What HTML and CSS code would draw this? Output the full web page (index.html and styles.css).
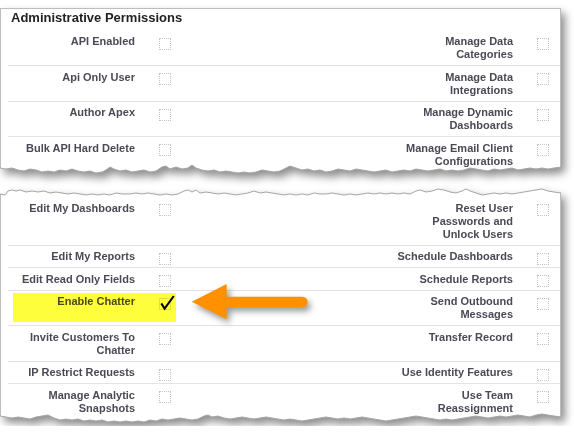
FILE: index.html
```html
<!DOCTYPE html>
<html>
<head>
<meta charset="utf-8">
<link rel="stylesheet" href="styles.css">
</head>
<body>
<div class="page">
  <div class="sheet sheet-one">
    <div class="paper paper-one">
      <div class="title">Administrative Permissions</div>
      <div class="rows">
        <div class="lbl">API Enabled</div><div class="dat"><span class="cb"></span></div>
        <div class="lbl">Manage Data<br>Categories</div><div class="dat"><span class="cb"></span></div>
        <div class="lbl">Api Only User</div><div class="dat"><span class="cb"></span></div>
        <div class="lbl">Manage Data<br>Integrations</div><div class="dat"><span class="cb"></span></div>
        <div class="lbl">Author Apex</div><div class="dat"><span class="cb"></span></div>
        <div class="lbl">Manage Dynamic<br>Dashboards</div><div class="dat"><span class="cb"></span></div>
        <div class="lbl">Bulk API Hard Delete</div><div class="dat"><span class="cb"></span></div>
        <div class="lbl">Manage Email Client<br>Configurations</div><div class="dat"><span class="cb"></span></div>
      </div>
    </div>
    <svg class="edge" width="561" height="166" viewBox="0 0 561 166">
      <path class="jag" d="M0 160 L6 161 L12 160 L18 162 L24 163 L30 161 L36 162 L42 164 L48 163 L54 164 L60 162 L66 163 L72 161 L78 163 L84 164 L90 163 L96 165 L102 164 L106 162 L110 159 L114 161 L120 163 L126 162 L132 164 L138 163 L144 162 L150 164 L156 163 L162 159 L166 158 L170 161 L176 159 L182 161 L188 160 L192 157 L196 160 L202 162 L208 163 L214 162 L220 164 L226 163 L232 164 L238 165 L244 164 L250 165 L256 164 L262 162 L268 163 L274 164 L280 163 L286 160 L290 158 L296 160 L302 162 L308 161 L314 163 L320 162 L326 164 L332 163 L338 161 L344 162 L350 163 L356 161 L362 162 L368 163 L374 164 L380 163 L386 162 L392 164 L398 163 L404 162 L410 163 L416 161 L422 162 L428 163 L434 162 L440 161 L446 163 L452 162 L458 163 L464 162 L470 160 L476 161 L482 162 L488 163 L494 161 L500 162 L506 161 L512 160 L518 162 L524 161 L530 160 L536 161 L542 160 L548 161 L554 160 L561 159"/>
    </svg>
  </div>

  <div class="sheet sheet-two">
    <div class="clip-top">
      <div class="paper paper-two">
        <div class="rows">
          <div class="lbl">Edit My Dashboards</div><div class="dat"><span class="cb"></span></div>
          <div class="lbl">Reset User<br>Passwords and<br>Unlock Users</div><div class="dat"><span class="cb"></span></div>
          <div class="lbl">Edit My Reports</div><div class="dat"><span class="cb"></span></div>
          <div class="lbl">Schedule Dashboards</div><div class="dat"><span class="cb"></span></div>
          <div class="lbl">Edit Read Only Fields</div><div class="dat"><span class="cb"></span></div>
          <div class="lbl">Schedule Reports</div><div class="dat"><span class="cb"></span></div>
          <div class="lbl">Enable Chatter</div><div class="dat"><svg class="cbx" width="12" height="12" viewBox="0 0 12 12"><rect x="0.5" y="0.5" width="11" height="11" fill="none" stroke="#c4c4c4" stroke-dasharray="1 1"/><path d="M2.3 5.4 L5.6 10.6 L14.8 -2" fill="none" stroke="#000" stroke-width="2"/></svg></div>
          <div class="lbl">Send Outbound<br>Messages</div><div class="dat"><span class="cb"></span></div>
          <div class="lbl">Invite Customers To<br>Chatter</div><div class="dat"><span class="cb"></span></div>
          <div class="lbl">Transfer Record</div><div class="dat"><span class="cb"></span></div>
          <div class="lbl">IP Restrict Requests</div><div class="dat"><span class="cb"></span></div>
          <div class="lbl">Use Identity Features</div><div class="dat"><span class="cb"></span></div>
          <div class="lbl">Manage Analytic<br>Snapshots</div><div class="dat"><span class="cb"></span></div>
          <div class="lbl">Use Team<br>Reassignment<br>Wizards</div><div class="dat"><span class="cb"></span></div>
        </div>
        <div class="highlight"></div>
        <svg class="arrow" width="130" height="50" viewBox="0 0 130 50">
          <path d="M5.7 21.7 L40.7 4 L40.7 16.7 L116.4 16.7 A5.3 5.3 0 0 1 116.4 27.3 L40.7 27.3 L40.7 39.3 Z" fill="#ff9000"/>
        </svg>
      </div>
    </div>
    <svg class="edge" width="561" height="241" viewBox="0 0 561 241">
      <path class="jag" d="M0 9 L5 10 L8 6 L12 5 L16 6 L20 5 L26 7 L32 6 L38 7 L44 6 L50 8 L56 7 L62 8 L68 9 L74 8 L80 9 L86 10 L92 9 L98 10 L104 9 L110 10 L116 8 L122 9 L130 9 L136 8 L142 9 L148 8 L154 9 L160 10 L166 9 L172 10 L178 9 L184 6 L188 5 L192 7 L196 5 L200 8 L206 7 L212 8 L218 9 L224 8 L230 9 L236 10 L242 9 L248 8 L254 6 L260 8 L266 7 L272 8 L278 9 L284 10 L290 9 L296 10 L302 9 L308 10 L314 8 L320 9 L326 9 L332 8 L338 9 L344 10 L350 9 L356 10 L362 9 L368 8 L374 9 L380 8 L386 9 L392 8 L398 9 L404 8 L410 9 L416 6 L420 5 L426 7 L432 6 L438 4 L444 5 L450 7 L456 8 L462 6 L466 4 L470 6 L476 8 L482 10 L488 9 L494 8 L500 9 L506 8 L512 9 L518 8 L524 7 L530 6 L536 5 L542 4 L548 6 L554 7 L561 8"/>
      <path class="jag" d="M0 231 L6 232 L12 233 L18 232 L24 233 L30 234 L36 232 L42 231 L48 230 L54 233 L60 235 L66 234 L72 235 L78 234 L84 236 L90 235 L96 236 L102 235 L108 237 L114 236 L120 237 L126 236 L132 237 L138 236 L144 237 L150 235 L156 236 L162 234 L168 235 L174 234 L180 233 L186 234 L192 235 L198 234 L204 231 L208 230 L212 232 L218 231 L224 233 L230 234 L236 233 L242 232 L248 233 L254 234 L260 233 L266 232 L272 233 L278 234 L284 235 L290 234 L296 235 L302 236 L308 235 L314 234 L320 233 L326 232 L332 233 L338 234 L344 233 L350 234 L356 233 L362 232 L368 233 L374 234 L380 235 L386 236 L392 235 L398 234 L404 233 L410 232 L416 231 L422 232 L428 233 L434 234 L440 235 L446 234 L452 235 L458 234 L464 233 L470 232 L476 231 L482 232 L488 233 L494 232 L500 231 L506 232 L512 231 L518 230 L524 231 L530 232 L536 230 L542 229 L548 230 L554 231 L561 232"/>
    </svg>
  </div>
</div>
</body>
</html>
```
FILE: styles.css
```css
html, body {
  margin: 0;
  background: #fff;
}
body {
  font-family: "Liberation Sans", Arial, sans-serif;
}
.page {
  padding-top: 8px;
}
.sheet {
  position: relative;
  width: 561px;
  filter: drop-shadow(4px 5px 4px rgba(0, 0, 0, 0.45));
}
.sheet-two {
  margin-top: 11px;
}
.paper {
  position: relative;
  box-sizing: border-box;
  background: #fff;
  border-left: 1px solid #bdbdbd;
  border-right: 1px solid #bdbdbd;
}
.paper-one {
  height: 166px;
  border-top: 1px solid #bdbdbd;
  clip-path: path('M0 0 L0 160 L6 161 L12 160 L18 162 L24 163 L30 161 L36 162 L42 164 L48 163 L54 164 L60 162 L66 163 L72 161 L78 163 L84 164 L90 163 L96 165 L102 164 L106 162 L110 159 L114 161 L120 163 L126 162 L132 164 L138 163 L144 162 L150 164 L156 163 L162 159 L166 158 L170 161 L176 159 L182 161 L188 160 L192 157 L196 160 L202 162 L208 163 L214 162 L220 164 L226 163 L232 164 L238 165 L244 164 L250 165 L256 164 L262 162 L268 163 L274 164 L280 163 L286 160 L290 158 L296 160 L302 162 L308 161 L314 163 L320 162 L326 164 L332 163 L338 161 L344 162 L350 163 L356 161 L362 162 L368 163 L374 164 L380 163 L386 162 L392 164 L398 163 L404 162 L410 163 L416 161 L422 162 L428 163 L434 162 L440 161 L446 163 L452 162 L458 163 L464 162 L470 160 L476 161 L482 162 L488 163 L494 161 L500 162 L506 161 L512 160 L518 162 L524 161 L530 160 L536 161 L542 160 L548 161 L554 160 L561 159 L561 0 Z');
}
.clip-top {
  clip-path: path('M0 241 L0 9 L5 10 L8 6 L12 5 L16 6 L20 5 L26 7 L32 6 L38 7 L44 6 L50 8 L56 7 L62 8 L68 9 L74 8 L80 9 L86 10 L92 9 L98 10 L104 9 L110 10 L116 8 L122 9 L130 9 L136 8 L142 9 L148 8 L154 9 L160 10 L166 9 L172 10 L178 9 L184 6 L188 5 L192 7 L196 5 L200 8 L206 7 L212 8 L218 9 L224 8 L230 9 L236 10 L242 9 L248 8 L254 6 L260 8 L266 7 L272 8 L278 9 L284 10 L290 9 L296 10 L302 9 L308 10 L314 8 L320 9 L326 9 L332 8 L338 9 L344 10 L350 9 L356 10 L362 9 L368 8 L374 9 L380 8 L386 9 L392 8 L398 9 L404 8 L410 9 L416 6 L420 5 L426 7 L432 6 L438 4 L444 5 L450 7 L456 8 L462 6 L466 4 L470 6 L476 8 L482 10 L488 9 L494 8 L500 9 L506 8 L512 9 L518 8 L524 7 L530 6 L536 5 L542 4 L548 6 L554 7 L561 8 L561 241 Z');
}
.paper-two {
  height: 241px;
  padding-top: 12px;
  clip-path: path('M0 0 L0 231 L6 232 L12 233 L18 232 L24 233 L30 234 L36 232 L42 231 L48 230 L54 233 L60 235 L66 234 L72 235 L78 234 L84 236 L90 235 L96 236 L102 235 L108 237 L114 236 L120 237 L126 236 L132 237 L138 236 L144 237 L150 235 L156 236 L162 234 L168 235 L174 234 L180 233 L186 234 L192 235 L198 234 L204 231 L208 230 L212 232 L218 231 L224 233 L230 234 L236 233 L242 232 L248 233 L254 234 L260 233 L266 232 L272 233 L278 234 L284 235 L290 234 L296 235 L302 236 L308 235 L314 234 L320 233 L326 232 L332 233 L338 234 L344 233 L350 234 L356 233 L362 232 L368 233 L374 234 L380 235 L386 236 L392 235 L398 234 L404 233 L410 232 L416 231 L422 232 L428 233 L434 234 L440 235 L446 234 L452 235 L458 234 L464 233 L470 232 L476 231 L482 232 L488 233 L494 232 L500 231 L506 232 L512 231 L518 230 L524 231 L530 232 L536 230 L542 229 L548 230 L554 231 L561 232 L561 0 Z');
}
.edge {
  position: absolute;
  left: 0;
  top: 0;
  overflow: visible;
  pointer-events: none;
}
.jag {
  fill: none;
  stroke: #a6a6a6;
  stroke-width: 1;
}
.title {
  padding: 1px 0 4.5px 10px;
  font-weight: bold;
  font-size: 13px;
  line-height: 16px;
  color: #222;
}
.rows {
  margin-left: 7px;
  display: grid;
  grid-template-columns: 137px 241px 137px 37px;
}
.lbl {
  padding: 4.5px 10px 4px 5px;
  text-align: right;
  font-weight: bold;
  font-size: 11px;
  line-height: 13px;
  color: #4a4a56;
  border-bottom: 1px solid #e3e3e3;
}
.dat {
  padding: 7px 0 0 14px;
  border-bottom: 1px solid #e3e3e3;
}
.cb {
  display: block;
  width: 12px;
  height: 12px;
  box-sizing: border-box;
  border: 1px dotted #c4c4c4;
}
.cbx {
  display: block;
  overflow: visible;
}
.highlight {
  position: absolute;
  left: 12px;
  top: 108px;
  width: 163px;
  height: 29px;
  background: #fefe3c;
  mix-blend-mode: multiply;
}
.arrow {
  position: absolute;
  left: 185px;
  top: 95px;
  overflow: visible;
  filter: drop-shadow(3px 4px 3px rgba(0, 0, 0, 0.4));
}
```
